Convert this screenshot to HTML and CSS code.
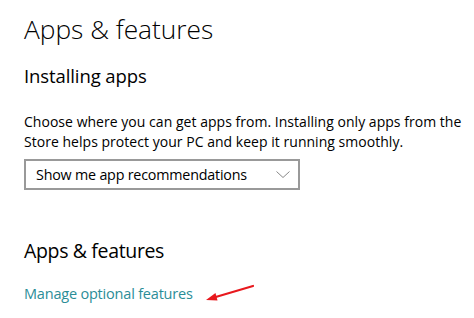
FILE: index.html
```html
<!DOCTYPE html>
<html>
<head>
<meta charset="utf-8">
<link rel="stylesheet" href="styles.css">
</head>
<body>
<main class="page">
  <h1 class="title">Apps &amp; features</h1>
  <h2 class="subtitle">Installing apps</h2>
  <p class="desc">Choose where you can get apps from. Installing only apps from the Store helps protect your PC and keep it running smoothly.</p>
  <div class="select">
    <span class="select-text">Show me app recommendations</span>
    <svg class="chevron" width="14" height="7" viewBox="0 0 14 7"><path d="M0.5 0.5 L7 6.5 L13.5 0.5" fill="none" stroke="#888" stroke-width="1"/></svg>
  </div>
  <h3 class="section">Apps &amp; features</h3>
  <div class="link-row">
    <a class="link">Manage optional features</a>
    <svg class="arrow" width="56" height="20" viewBox="0 0 56 20"><path d="M49 2 L10 13.5" stroke="#e8191e" stroke-width="2.2" stroke-linecap="round"/><path d="M2 16 L11.5 9 L13.5 16.5 Z" fill="#e8191e"/></svg>
  </div>
</main>
</body>
</html>
```
FILE: styles.css
```css
html, body { margin: 0; padding: 0; background: #fff; }
body { font-family: "Open Sans", "Noto Sans", sans-serif; color: #000; }
.page { padding: 11px 0 0 24px; }
.title { margin: 0; font-weight: 300; font-size: 26.3px; line-height: 36px; letter-spacing: 0; }
.subtitle { margin: 17px 0 0 0; font-weight: 400; font-size: 18.5px; line-height: 24px; letter-spacing: -0.1px; }
.desc { margin: 24px 0 0 0; font-size: 14px; line-height: 20px; width: 450px; letter-spacing: 0.03px; }
.select { margin-top: 7px; width: 254px; height: 27px; border: 2px solid #999; display: flex; align-items: center; justify-content: space-between; padding: 0 8px 0 10px; box-sizing: content-box; }
.select-text { font-size: 14.3px; letter-spacing: -0.2px; }
.chevron { display: block; }
.section { margin: 47px 0 0 0; font-weight: 400; font-size: 19.5px; line-height: 28px; letter-spacing: -0.35px; }
.link-row { margin-top: 19px; display: flex; align-items: flex-start; }
.link { color: #2b8d97; font-size: 14.5px; line-height: 20px; letter-spacing: -0.2px; }
.arrow { display: block; margin: 0 0 0 11px; }
```
